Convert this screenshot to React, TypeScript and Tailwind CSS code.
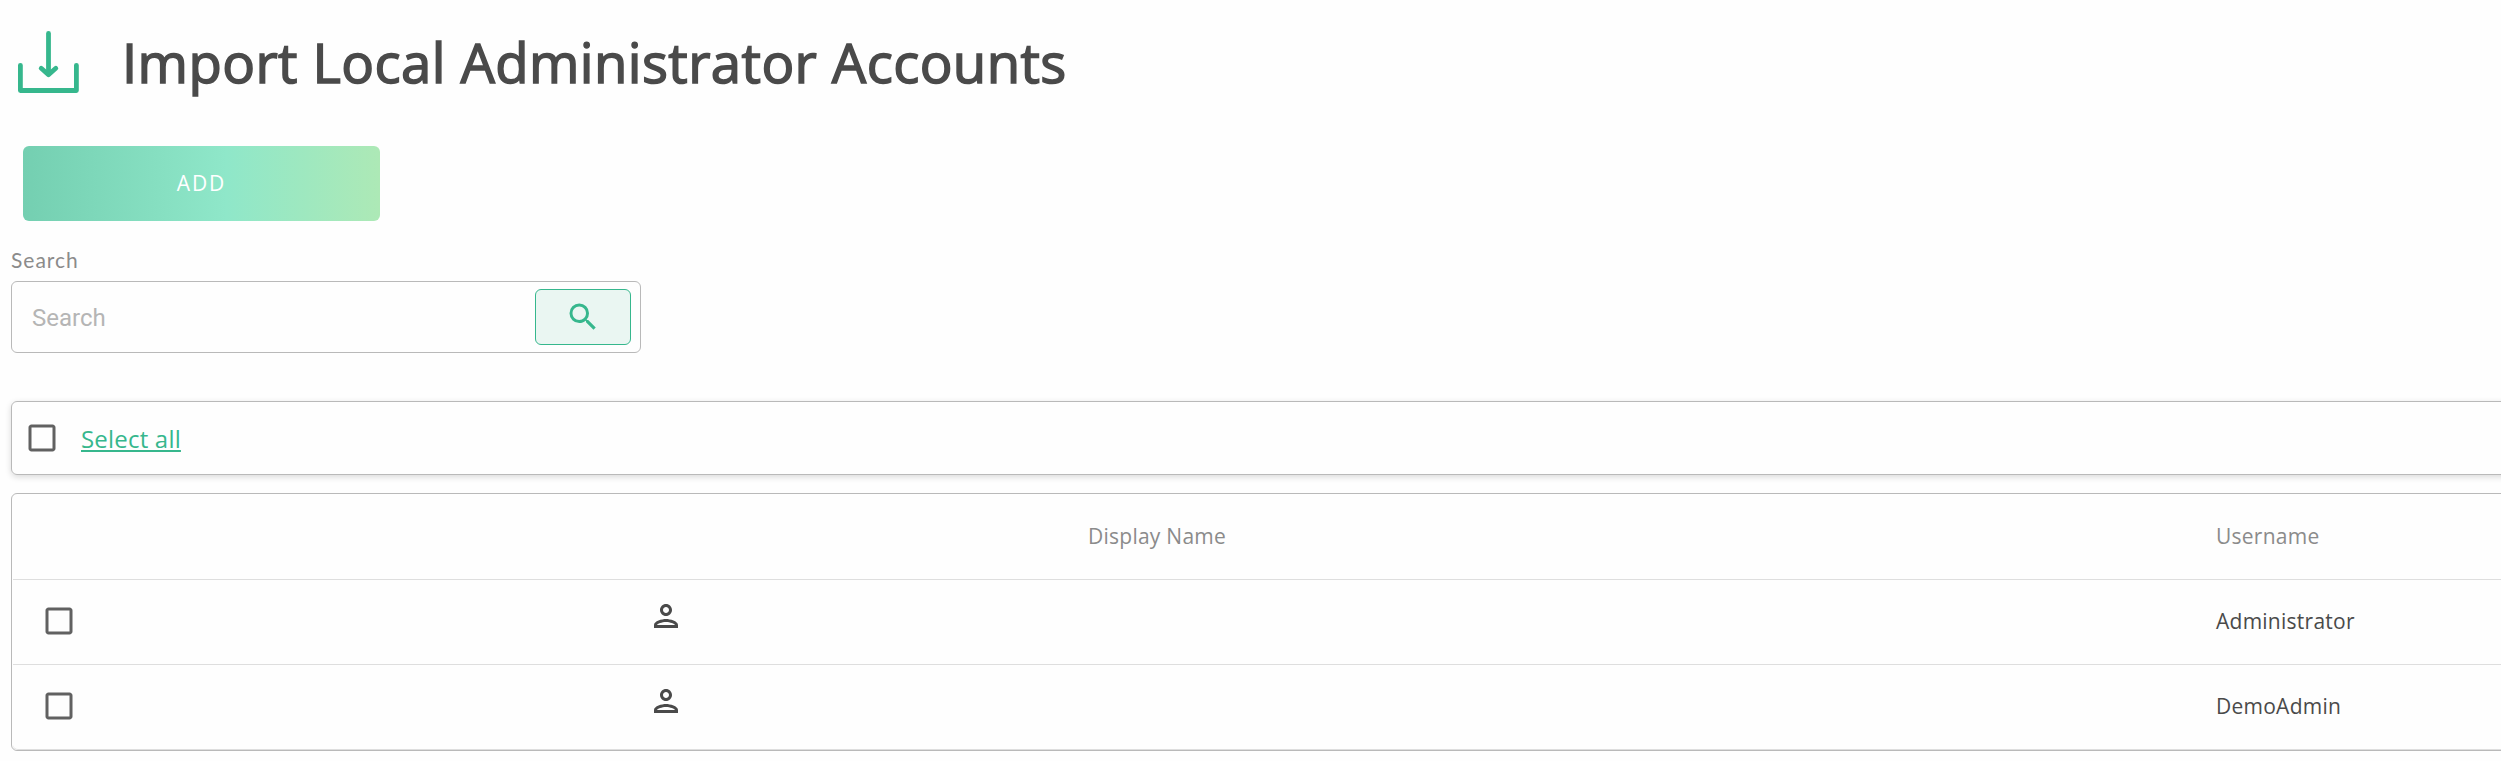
import React, { useState } from "react";
import { MdCheckBoxOutlineBlank, MdOutlineCheckBox, MdOutlinePerson, MdSearch } from "react-icons/md";

const accounts = [
  { id: 1, displayName: "", username: "Administrator" },
  { id: 2, displayName: "", username: "DemoAdmin" },
];

function ImportIcon() {
  return (
    <svg width="62" height="64" viewBox="0 0 62 64" fill="none" stroke="#36b78d" strokeLinecap="round" strokeLinejoin="round">
      <path d="M2.4 35.3V60.5H58.4V35.3" strokeWidth="4.8" />
      <path d="M30.5 3.5V44" strokeWidth="4.8" />
      <path d="M23.2 38.3L30.5 44.8L37.8 38.3" strokeWidth="4.8" />
    </svg>
  );
}

function Checkbox({ checked, onChange }: { checked: boolean; onChange: () => void }) {
  return (
    <button type="button" role="checkbox" aria-checked={checked} onClick={onChange} className="block text-[#616161]">
      {checked ? <MdOutlineCheckBox size={36} /> : <MdCheckBoxOutlineBlank size={36} />}
    </button>
  );
}

export default function App() {
  const [selected, setSelected] = useState<number[]>([]);
  const [query, setQuery] = useState("");

  const allSelected = selected.length === accounts.length;
  const visible = accounts.filter((a) => a.username.toLowerCase().includes(query.toLowerCase()));

  const toggle = (id: number) => {
    setSelected(selected.includes(id) ? selected.filter((s) => s !== id) : [...selected, id]);
  };

  const toggleAll = () => {
    setSelected(allSelected ? [] : accounts.map((a) => a.id));
  };

  return (
    <div className="h-[761px] overflow-hidden bg-[#fefefe] pl-[11px] font-['Open_Sans',sans-serif] text-[#4a4a4a]">
      <header className="flex h-[146px] items-start pt-[30px] pl-[7px]">
        <ImportIcon />
        <h1 className="ml-[42px] text-[54.5px] leading-[65px] tracking-[0.4px] whitespace-nowrap [-webkit-text-stroke:1.5px_#4a4a4a]">
          Import Local Administrator Accounts
        </h1>
      </header>

      <button
        type="button"
        className="ml-3 block h-[75px] w-[357px] rounded-[6px] bg-[linear-gradient(90deg,#74cfb1_0%,#8fe7c9_57%,#ade9b6_100%)] text-[21px] tracking-[1.9px] text-white"
      >
        ADD
      </button>

      <label className="mt-6 block h-9 font-['Lato',sans-serif] text-[21px] leading-[30px] tracking-[1px] text-[#8b8b8b]">
        Search
      </label>
      <div className="flex h-[72px] w-[630px] items-center rounded-[6px] border border-[#b9b9b9] pr-[9px] pl-5">
        <input
          value={query}
          onChange={(e) => setQuery(e.target.value)}
          placeholder="Search"
          className="min-w-0 flex-1 pt-0.5 font-['Roboto',sans-serif] text-2xl outline-none placeholder:text-[#b5b5b5]"
        />
        <button
          type="button"
          className="flex h-14 w-24 items-center justify-center rounded-[6px] border border-[#36b78d] bg-[#eaf6f2] text-[#36b78d]"
        >
          <MdSearch size={36} />
        </button>
      </div>

      <div className="mt-12 flex h-[74px] w-[2520px] items-center rounded-[6px] border border-[#b9b9b9] pl-3 shadow-[0_2px_6px_rgba(0,0,0,0.15)]">
        <Checkbox checked={allSelected} onChange={toggleAll} />
        <button
          type="button"
          onClick={toggleAll}
          className="ml-[21px] pt-0.5 text-2xl tracking-[0.2px] text-[#36b78d] underline decoration-2 underline-offset-2"
        >
          Select all
        </button>
      </div>

      <div className="mt-[18px] w-[2520px] rounded-[6px] border border-[#b9b9b9] px-px text-[21px] tracking-[0.25px]">
        <div className="flex h-[86px] items-center border-b border-[#dedede] text-[#8b8b8b]">
          <div className="w-[1075px]" />
          <div className="w-[1128px]">Display Name</div>
          <div>Username</div>
        </div>
        {visible.map((account) => (
          <div key={account.id} className="flex h-[85px] items-center border-b border-[#dedede] last:rounded-b-[5px]">
            <div className="w-[635px] pb-0.5 pl-7">
              <Checkbox checked={selected.includes(account.id)} onChange={() => toggle(account.id)} />
            </div>
            <div className="w-[440px] pb-3">
              <MdOutlinePerson size={36} />
            </div>
            <div className="w-[1128px]">{account.displayName}</div>
            <div>{account.username}</div>
          </div>
        ))}
      </div>
    </div>
  );
}
